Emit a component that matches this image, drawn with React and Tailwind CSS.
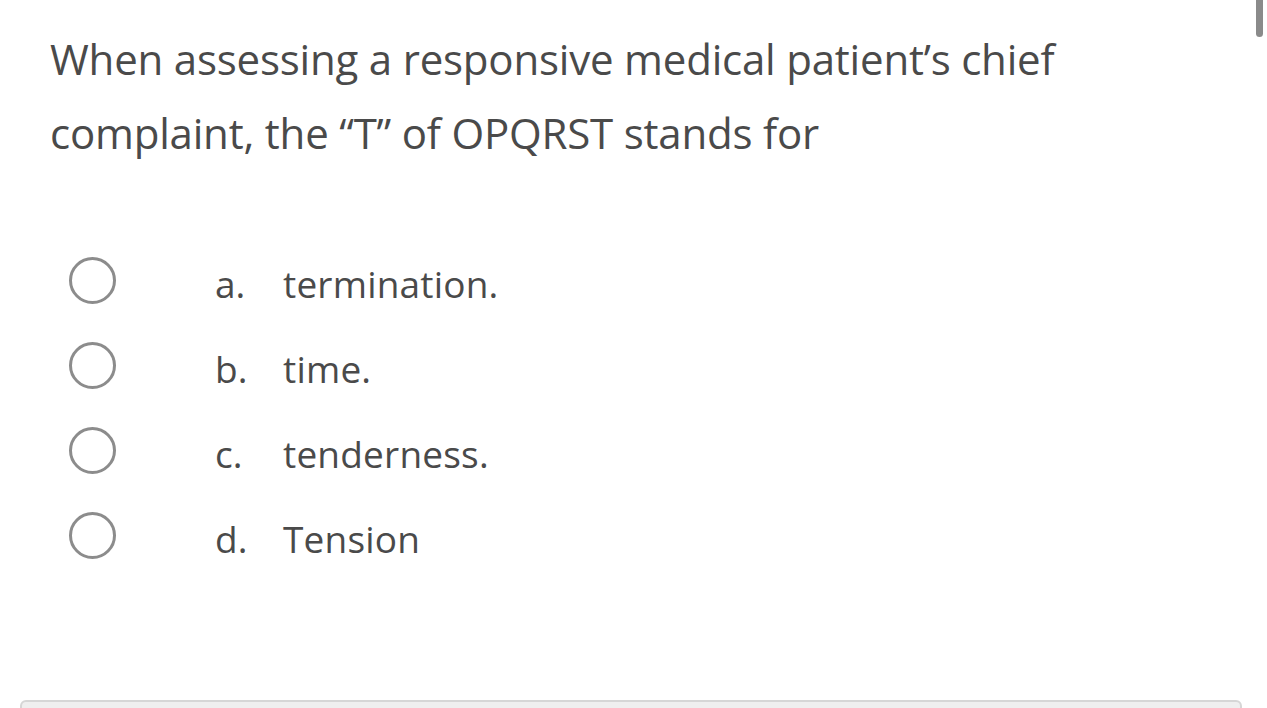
import { useState } from "react";

const options = [
  { key: "a.", text: "termination." },
  { key: "b.", text: "time." },
  { key: "c.", text: "tenderness." },
  { key: "d.", text: "Tension" },
];

export default function App() {
  const [picked, setPicked] = useState(null);

  return (
    <div
      className="relative h-[708px] w-full overflow-hidden bg-white text-[#4a4a4a]"
      style={{ fontFamily: "'Open Sans', 'Noto Sans', sans-serif" }}
    >
      <div className="absolute right-[4px] top-0 h-[37px] w-[7px] rounded-b-full bg-[#8a8a8a]" />

      <div className="pl-[50px] pr-[60px] pt-[22px]">
        <p className="text-[42px] leading-[74px] tracking-[-0.2px]">
          When assessing a responsive medical patient’s chief
          <br />
          complaint, the “T” of OPQRST stands for
        </p>

        <div className="mt-[68px] flex flex-col">
          {options.map((o, i) => (
            <button
              key={o.key}
              onClick={() => setPicked(i)}
              className="flex h-[85px] items-center text-left"
            >
              <span className="ml-[19px] flex h-[47px] w-[47px] items-center justify-center rounded-full border-[3px] border-[#8c8c8c]">
                {picked === i && <span className="h-[22px] w-[22px] rounded-full bg-[#6a6a6a]" />}
              </span>
              <span className="ml-[99px] w-[68px] pt-[6px] text-[37px]">{o.key}</span>
              <span className="pt-[6px] text-[37px] tracking-[0.2px]">{o.text}</span>
            </button>
          ))}
        </div>
      </div>

      <div className="absolute bottom-[-20px] left-[20px] right-[25px] h-[28px] rounded-t-[6px] border-[2px] border-[#d6d6d6] bg-[#efefef]" />
    </div>
  );
}
